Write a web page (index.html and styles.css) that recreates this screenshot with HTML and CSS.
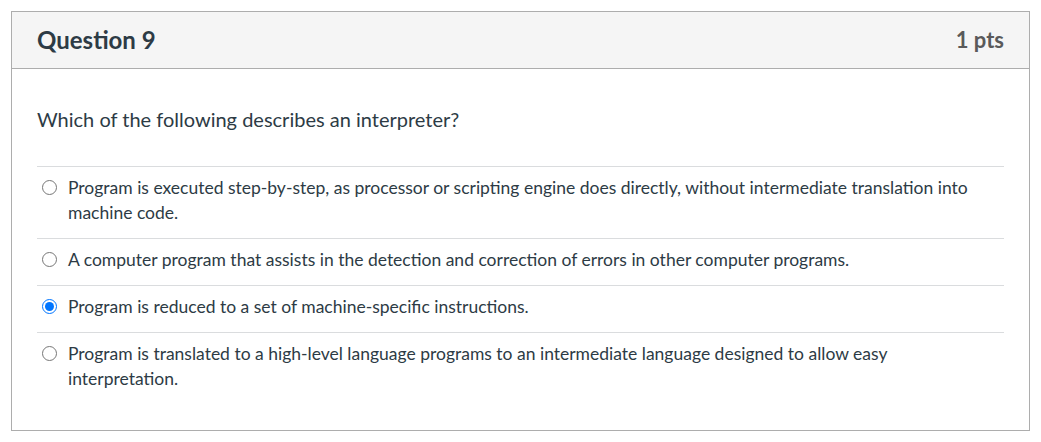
FILE: index.html
```html
<!DOCTYPE html>
<html lang="en">
<head>
<meta charset="utf-8">
<link rel="stylesheet" href="styles.css">
</head>
<body>
<div class="page">
  <div class="question">
    <div class="q-header">
      <h2 class="q-title">Question 9</h2>
      <span class="q-points">1 pts</span>
    </div>
    <div class="q-body">
      <p class="q-text">Which of the following describes an interpreter?</p>
      <div class="answers">
        <label class="answer">
          <span class="radio-cell"><input type="radio" name="q9"></span>
          <span class="answer-text">Program is executed step-by-step, as processor or scripting engine does directly, without intermediate translation into machine code.</span>
        </label>
        <label class="answer">
          <span class="radio-cell"><input type="radio" name="q9"></span>
          <span class="answer-text">A computer program that assists in the detection and correction of errors in other computer programs.</span>
        </label>
        <label class="answer">
          <span class="radio-cell"><input type="radio" name="q9" checked></span>
          <span class="answer-text">Program is reduced to a set of machine-specific instructions.</span>
        </label>
        <label class="answer">
          <span class="radio-cell"><input type="radio" name="q9"></span>
          <span class="answer-text">Program is translated to a high-level language programs to an intermediate language designed to allow easy interpretation.</span>
        </label>
      </div>
    </div>
  </div>
</div>
</body>
</html>
```

FILE: styles.css
```css
html, body {
  margin: 0;
  padding: 0;
  background: #ffffff;
}

body {
  font-family: Lato, "Liberation Sans", sans-serif;
  color: #2d3b45;
}

.page {
  padding: 11px 11px 0 11px;
}

.question {
  width: 1019px;
  box-sizing: border-box;
  border: 1px solid #adadad;
  background: #ffffff;
}

.q-header {
  display: flex;
  align-items: center;
  justify-content: space-between;
  height: 56px;
  padding: 0 25px;
  background: #f5f5f5;
  border-bottom: 1px solid #adadad;
}

.q-title {
  margin: 0;
  font-size: 24px;
  font-weight: 700;
  color: #2d3b45;
  position: relative;
  top: -1px;
}

.q-points {
  font-size: 22px;
  font-weight: 700;
  color: #5a5a5a;
  position: relative;
  top: -1px;
}

.q-body {
  padding: 0 25px 26px 25px;
}

.q-text {
  margin: 0;
  padding: 37px 0 34px 0;
  font-size: 20px;
  line-height: 26px;
}

.answers {
  display: flex;
  flex-direction: column;
}

.answer {
  display: flex;
  align-items: flex-start;
  border-top: 1px solid #dadcde;
  padding: 8px 0 13px 0;
  font-size: 17.5px;
  line-height: 25px;
  color: #2d3b45;
}

.radio-cell {
  flex: 0 0 31px;
  display: flex;
  align-items: center;
  height: 25px;
}

.radio-cell input {
  margin: 0 0 0 5px;
  width: 15px;
  height: 15px;
}

.answer-text {
  flex: 1;
  padding-right: 20px;
}
```
